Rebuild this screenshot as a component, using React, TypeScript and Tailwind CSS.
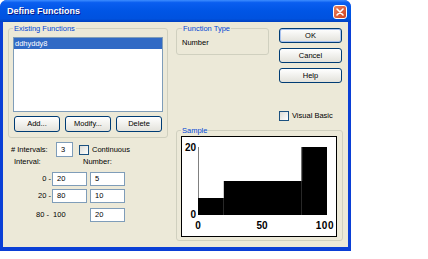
import React from "react";

const btn =
  "flex items-center justify-center rounded-[3px] border border-[#003C74] bg-gradient-to-b from-white to-[#E3E2DB] text-black leading-none";

function Checkbox({ label }: { label: string }) {
  return (
    <label className="flex items-center gap-[3px]">
      <span className="block w-[10px] h-[10px] border border-[#1C5180] bg-gradient-to-br from-[#DCDCD7] to-white" />
      <span>{label}</span>
    </label>
  );
}

function Field({ value, w }: { value: string; w: string }) {
  return (
    <div className={`${w} h-[14px] flex items-center border border-[#7F9DB9] bg-white pl-[4px] leading-none`}>
      {value}
    </div>
  );
}

function SampleChart() {
  const x = (v: number) => 16 + v * 1.29;
  const y = (n: number) => 78 - n * 3.4;
  const bars = [
    { from: 0, to: 20, n: 5 },
    { from: 20, to: 80, n: 10 },
    { from: 80, to: 100, n: 20 },
  ];
  return (
    <div className="w-[156px] h-[101px] border border-black bg-white">
      <svg width="154" height="99" className="block">
        {bars.map((b) => (
          <rect key={b.from} x={x(b.from)} y={y(b.n)} width={x(b.to) - x(b.from)} height={y(0) - y(b.n)} fill="#000" />
        ))}
        <line x1={x(0) + 0.5} y1={y(20)} x2={x(0) + 0.5} y2={y(5)} stroke="#808080" />
        <line x1={x(80) + 0.5} y1={y(20)} x2={x(80) + 0.5} y2={y(10)} stroke="#808080" />
        <g fontFamily="'Liberation Sans', Arial, sans-serif" fontWeight="bold" fontSize="10" fill="#000">
          <text x="14" y="14" textAnchor="end">20</text>
          <text x="14" y="81" textAnchor="end">0</text>
          <text x="16" y="92" textAnchor="middle">0</text>
          <text x="80" y="92" textAnchor="middle">50</text>
          <text x="152" y="92" textAnchor="end" letterSpacing="0.5">100</text>
        </g>
      </svg>
    </div>
  );
}

export default function App() {
  return (
    <div className="w-[428px] h-[259px] bg-white font-['Liberation_Sans',Arial,sans-serif] text-[7.5px] text-black">
      <div className="w-[351px] h-[251px] flex flex-col rounded-t-[7px] bg-[#0A3FD6] overflow-hidden">
        {/* title bar */}
        <div className="h-[22px] shrink-0 flex items-center justify-between pl-[7px] pr-[4px] pt-[1px] bg-[linear-gradient(to_bottom,#3D8DFF_0%,#0A5EF0_12%,#0055E5_50%,#0052DF_85%,#0040C0_100%)]">
          <span className="text-white font-bold text-[9px] leading-none [text-shadow:1px_1px_0_#0A1883]">
            Define Functions
          </span>
          <span className="w-[14px] h-[14px] flex items-center justify-center rounded-[3px] border border-white bg-gradient-to-br from-[#E8805C] to-[#D2401C]">
            <svg width="8" height="8" viewBox="0 0 8 8">
              <path d="M1 1 L7 7 M7 1 L1 7" stroke="#fff" strokeWidth="1.6" strokeLinecap="round" />
            </svg>
          </span>
        </div>

        {/* client area */}
        <div className="flex-1 mx-[3px] mb-[4px] bg-[#ECE9D8] flex gap-[9px] pl-[5px] pt-[2px]">
          {/* left column */}
          <div className="w-[159px] flex flex-col">
            <fieldset className="border border-[#D0D0BF] rounded-[3px] px-[4px] pb-[5px]">
              <legend className="px-[1px] leading-[9px] text-[#0046D5]">Existing Functions</legend>
              <div className="mt-[4px] w-[150px] h-[75px] border border-[#7F9DB9] bg-white">
                <div className="h-[11px] flex items-center bg-[#316AC5] text-white pl-[1px] leading-none">ddhyddy8</div>
              </div>
              <div className="mt-[4px] flex gap-[5px] pl-[1px]">
                <div className={`${btn} w-[46px] h-[16px]`}>Add...</div>
                <div className={`${btn} w-[46px] h-[16px]`}>Modify...</div>
                <div className={`${btn} w-[46px] h-[16px]`}>Delete</div>
              </div>
            </fieldset>

            <div className="mt-[4px] flex items-center pl-[3px] h-[15px]">
              <span className="w-[45px]"># Intervals:</span>
              <div className="w-[17px] h-[15px] flex items-center border border-[#7F9DB9] bg-white pl-[4px] leading-none">3</div>
              <div className="ml-[6px]">
                <Checkbox label="Continuous" />
              </div>
            </div>

            <div className="h-[9px] flex items-center leading-none">
              <span className="ml-[6px] w-[69px]">Interval:</span>
              <span>Number:</span>
            </div>

            <div className="mt-[6px] flex items-center">
              <span className="w-[44px] text-right pr-[1px]">0 -</span>
              <Field value="20" w="w-[35px]" />
              <div className="ml-[3px]"><Field value="5" w="w-[35px]" /></div>
            </div>
            <div className="mt-[3px] flex items-center">
              <span className="w-[44px] text-right pr-[1px]">20 -</span>
              <Field value="80" w="w-[35px]" />
              <div className="ml-[3px]"><Field value="10" w="w-[35px]" /></div>
            </div>
            <div className="mt-[5px] flex items-center">
              <span className="ml-[28px] w-[54px]">80 -&nbsp; 100</span>
              <Field value="20" w="w-[35px]" />
            </div>
          </div>

          {/* right column */}
          <div className="w-[167px] flex flex-col">
            <div className="flex gap-[10px]">
              <fieldset className="w-[93px] h-[31px] border border-[#D0D0BF] rounded-[3px] px-[5px]">
                <legend className="px-[1px] leading-[9px] text-[#0046D5]">Function Type</legend>
                <div className="mt-[6px] leading-none">Number</div>
              </fieldset>
              <div className="mt-[4px] flex flex-col gap-[5px]">
                <div className={`${btn} w-[63px] h-[15px] shadow-[inset_0_0_0_1px_#A9C3F0]`}>OK</div>
                <div className={`${btn} w-[63px] h-[15px]`}>Cancel</div>
                <div className={`${btn} w-[63px] h-[15px]`}>Help</div>
              </div>
            </div>

            <div className="mt-[28px] ml-[103px] h-[9px] flex items-center">
              <Checkbox label="Visual Basic" />
            </div>

            <fieldset className="mt-[6px] w-[167px] border border-[#D0D0BF] rounded-[3px] pl-[4px] pb-[3px]">
              <legend className="px-[1px] leading-[9px] text-[#0046D5]">Sample</legend>
              <div className="mt-[1px]">
                <SampleChart />
              </div>
            </fieldset>
          </div>
        </div>
      </div>
    </div>
  );
}
